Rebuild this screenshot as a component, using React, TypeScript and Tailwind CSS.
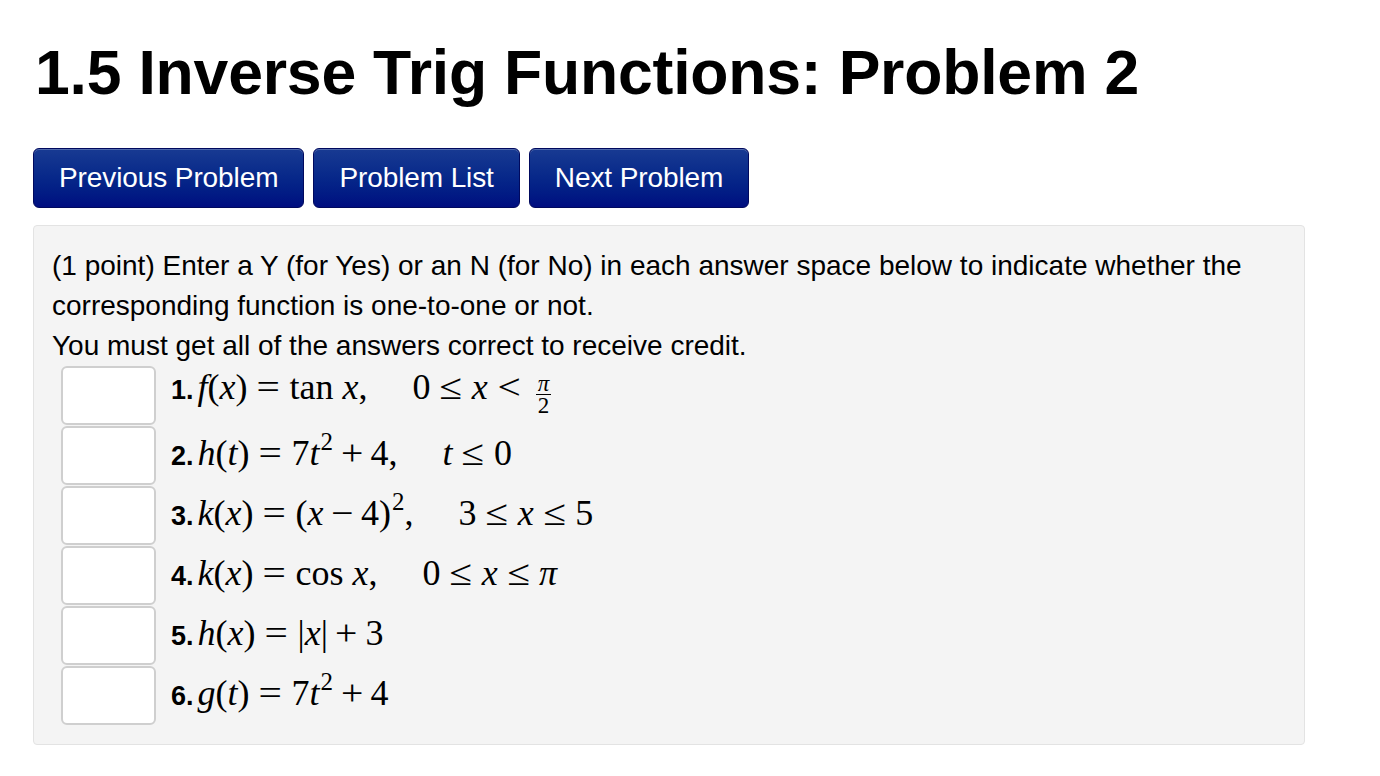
const sans = { fontFamily: '"Liberation Sans", Arial, sans-serif' };
const serif = { fontFamily: '"Liberation Serif", "Times New Roman", serif' };

function V({ children }: { children: React.ReactNode }) {
  return <span className="italic">{children}</span>;
}

// relation (=, ≤, <) with thick spacing
function R({ children }: { children: React.ReactNode }) {
  return <span className="mx-[0.3em] inline-block scale-x-[1.15]">{children}</span>;
}

// binary operator (+, −) with medium spacing
function B({ children }: { children: React.ReactNode }) {
  return <span className="mx-[0.24em] inline-block scale-x-[1.1]">{children}</span>;
}

function Sup({ children }: { children: React.ReactNode }) {
  return <span className="text-[25px] relative top-[-15px] ml-[1px]">{children}</span>;
}

function Gap() {
  return <span className="inline-block w-[45px]" />;
}

function Frac({ top, bottom }: { top: React.ReactNode; bottom: React.ReactNode }) {
  return (
    <span className="inline-flex flex-col items-center text-[23px] leading-[20px] ml-[6px] relative top-[-8px]">
      <span className="border-b border-black px-[2px] italic">{top}</span>
      <span className="pt-[1px]">{bottom}</span>
    </span>
  );
}

const rows: { n: string; math: React.ReactNode }[] = [
  {
    n: '1.',
    math: (
      <>
        <V>f</V>(<V>x</V>)<R>=</R>tan <V>x</V>,<Gap />0<R>≤</R>
        <V>x</V>
        <R>&lt;</R>
        <Frac top="π" bottom="2" />
      </>
    ),
  },
  {
    n: '2.',
    math: (
      <>
        <V>h</V>(<V>t</V>)<R>=</R>7<V>t</V>
        <Sup>2</Sup>
        <B>+</B>4,<Gap />
        <V>t</V>
        <R>≤</R>0
      </>
    ),
  },
  {
    n: '3.',
    math: (
      <>
        <V>k</V>(<V>x</V>)<R>=</R>(<V>x</V>
        <B>−</B>4)<Sup>2</Sup>,<Gap />3<R>≤</R>
        <V>x</V>
        <R>≤</R>5
      </>
    ),
  },
  {
    n: '4.',
    math: (
      <>
        <V>k</V>(<V>x</V>)<R>=</R>cos <V>x</V>,<Gap />0<R>≤</R>
        <V>x</V>
        <R>≤</R>
        <V>π</V>
      </>
    ),
  },
  {
    n: '5.',
    math: (
      <>
        <V>h</V>(<V>x</V>)<R>=</R>|<V>x</V>|<B>+</B>3
      </>
    ),
  },
  {
    n: '6.',
    math: (
      <>
        <V>g</V>(<V>t</V>)<R>=</R>7<V>t</V>
        <Sup>2</Sup>
        <B>+</B>4
      </>
    ),
  },
];

const buttons = ['Previous Problem', 'Problem List', 'Next Problem'];

export default function App() {
  return (
    <div className="min-h-screen bg-white text-black px-[33px] pt-[36px]" style={sans}>
      <h1 className="text-[62.5px] leading-[72px] font-bold tracking-[-0.2px] pl-[2px]">
        1.5 Inverse Trig Functions: Problem 2
      </h1>

      <div className="flex gap-[9px] mt-[40px]">
        {buttons.map((b) => (
          <button
            key={b}
            className="h-[60px] px-[25px] rounded-[6px] border border-[#00095e] bg-gradient-to-b from-[#183a92] to-[#000d80] text-white text-[28px] tracking-[-0.1px] shadow-[inset_0_1px_0_rgba(255,255,255,0.25)]"
          >
            {b}
          </button>
        ))}
      </div>

      <div className="mt-[17px] w-[1272px] bg-[#f4f4f4] border border-[#e3e3e3] rounded-[4px] pl-[18px] pr-[19px] pt-[20px] pb-[19px]">
        <p className="text-[28px] leading-[40px]">
          (1 point) Enter a Y (for Yes) or an N (for No) in each answer space below to indicate whether the
          corresponding function is one-to-one or not.
          <br />
          You must get all of the answers correct to receive credit.
        </p>
        <div className="flex flex-col mt-[-1px]">
          {rows.map((r) => (
            <div key={r.n} className="flex items-center h-[60px]">
              <div className="ml-[9px] w-[95px] h-[59px] bg-white border-2 border-[#cfcfcf] rounded-[6px]" />
              <div className="ml-[15px] flex items-baseline">
                <span className="font-bold text-[27px] mr-[4px]">{r.n}</span>
                <span className="text-[36px] leading-[40px] whitespace-nowrap" style={serif}>
                  {r.math}
                </span>
              </div>
            </div>
          ))}
        </div>
      </div>
    </div>
  );
}
